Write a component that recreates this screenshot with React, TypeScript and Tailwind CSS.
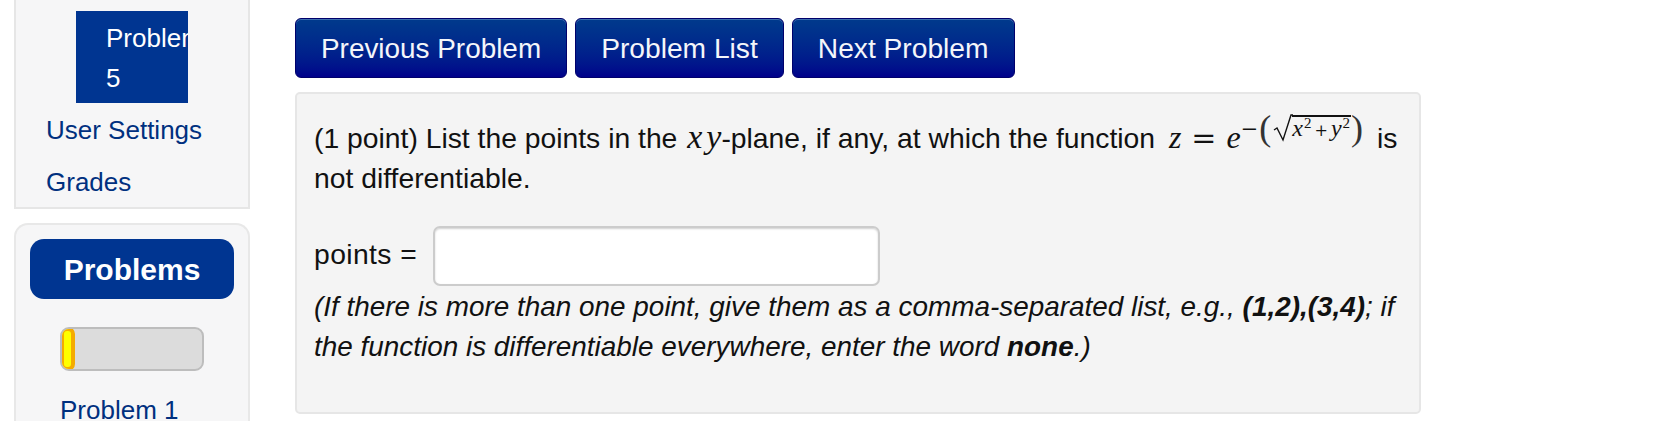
export default function App() {
  const nav = "flex h-[60px] items-center rounded-[6px] border border-[#00006b] bg-gradient-to-b from-[#003a8c] to-[#00008b] px-[25px] pt-[1px] text-[#f4f6fa] shadow-[inset_0_1px_0_#3f6fb0]";
  const wide = "font-['DejaVu_Serif',serif] not-italic";
  return (
    <div className="flex h-[421px] w-[1668px] overflow-hidden bg-white font-['Liberation_Sans',sans-serif] text-[28.3px] text-[#111]">
      <aside className="ml-[14px] flex w-[236px] shrink-0 flex-col">
        <div className="flex h-[209px] shrink-0 flex-col border-2 border-t-0 border-[#e6e6e6] bg-[#f6f6f7] pt-[11px]">
          <div className="ml-[60px] h-[92px] w-[112px] overflow-hidden bg-[#003591] pl-[30px] text-[26px] leading-[40px] text-white">
            <div className="w-[200px] pt-[7px]">Problem</div>
            <div>5</div>
          </div>
          <div className="ml-[30px] mt-[7px] text-[26px] leading-[40px] text-[#00307f]">User Settings</div>
          <div className="ml-[30px] mt-[12px] text-[26px] leading-[40px] text-[#00307f]">Grades</div>
        </div>
        <div className="mt-[14px] flex-1 rounded-t-[14px] border-2 border-b-0 border-[#e8e8e8] bg-[#f6f6f7] px-[14px] pt-[14px]">
          <div className="flex h-[60px] w-[204px] items-center justify-center rounded-[14px] bg-[#003591] text-[30px] font-bold text-white">Problems</div>
          <div className="ml-[30px] mt-[28px] h-[44px] w-[144px] overflow-hidden rounded-[9px] border-2 border-[#bdbdbd] bg-[#dcdcdc]">
            <div className="-ml-[2px] -mt-[2px] h-[44px] w-[15px] rounded-[7px] border-[4px] border-[#f5ab00] bg-[#ffff00]"></div>
          </div>
          <div className="ml-[30px] mt-[19px] text-[26px] leading-[40px] text-[#00307f]">Problem 1</div>
        </div>
      </aside>
      <main className="ml-[45px] w-[1126px] shrink-0 pt-[18px]">
        <div className="flex gap-[8px]">
          <button className={`${nav} text-[27.9px]`}>Previous Problem</button>
          <button className={`${nav} text-[28.2px]`}>Problem List</button>
          <button className={`${nav} text-[28.2px]`}>Next Problem</button>
        </div>
        <section className="mt-[14px] h-[322px] rounded-[5px] border-2 border-[#e6e6e6] bg-[#f4f4f4] pl-[17px] pt-[23px] leading-[40px]">
          <div className="h-[41px] whitespace-nowrap">
            (1 point) List the points in the <span className="ml-[2px] font-['Liberation_Serif',serif] text-[34px] italic"><span className="mr-[4px]">x</span>y</span>-plane, if any, at which the function{" "}
            <span className="ml-[6px] font-['Liberation_Serif',serif] text-[32px]"><i>z</i><span className={`${wide} mx-[10px] text-[30px]`}>=</span><i>e</i></span>
            <span className="relative -top-[13px] inline-flex items-center font-['Liberation_Serif',serif] text-[24px] leading-[24px]">
              <span className={`${wide} relative top-[1px] text-[21px]`}>−</span>
              <span className="ml-[1px] text-[36px] font-light leading-[24px] text-[#333]">(</span>
              <svg width="20" height="28" viewBox="0 0 20 28" className="-mr-px ml-[2px]" aria-hidden="true"><path d="M1 16 L4 14 L10 26 L18 1 L20 1" fill="none" stroke="#111" strokeWidth="1.4" /></svg>
              <span className="border-t-2 border-[#111] text-[24px] leading-[22px] tracking-[1px]"><i>x</i><sup className="text-[15px] leading-none">2</sup><span className={`${wide} mx-[2px] text-[16px]`}>+</span><i>y</i><sup className="text-[15px] leading-none">2</sup></span>
              <span className="text-[36px] font-light leading-[24px] text-[#333]">)</span>
            </span>
            <span className="ml-[14px]">is</span>
          </div>
          <div>not differentiable.</div>
          <div className="mt-[28px] flex h-[60px] items-center">
            <span className="relative -top-[2px] tracking-[0.4px]">points =</span>
            <input className="ml-[16px] h-[60px] w-[447px] rounded-[7px] border-2 border-[#cccccc] bg-white shadow-[inset_0_1px_2px_#00000030]" />
          </div>
          <div className="mt-[1px] whitespace-nowrap text-[27.9px] italic">(If there is more than one point, give them as a comma-separated list, e.g., <b>(1,2),(3,4)</b>; if</div>
          <div className="whitespace-nowrap text-[27.9px] italic">the function is differentiable everywhere, enter the word <b>none</b>.)</div>
        </section>
      </main>
    </div>
  );
}
